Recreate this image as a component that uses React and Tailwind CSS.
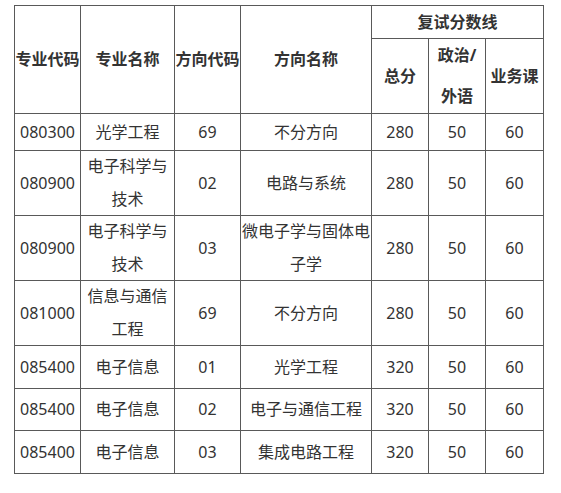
// 复试分数线 table
const rows = [
  ["080300", "光学工程", "69", "不分方向", "280", "50", "60"],
  ["080900", "电子科学与技术", "02", "电路与系统", "280", "50", "60"],
  ["080900", "电子科学与技术", "03", "微电子学与固体电子学", "280", "50", "60"],
  ["081000", "信息与通信工程", "69", "不分方向", "280", "50", "60"],
  ["085400", "电子信息", "01", "光学工程", "320", "50", "60"],
  ["085400", "电子信息", "02", "电子与通信工程", "320", "50", "60"],
  ["085400", "电子信息", "03", "集成电路工程", "320", "50", "60"],
];

function Cell({ children, className = "" }) {
  return (
    <div className={"bg-white flex items-center justify-center text-center leading-[33px] " + className}>
      <div>{children}</div>
    </div>
  );
}

export default function App() {
  return (
    <div
      className="w-[561px] h-[493px] bg-white pl-[14px] pt-[5px] text-[16px] text-[#333]"
      style={{ fontFamily: '"Noto Sans", "Noto Sans CJK SC", sans-serif' }}
    >
      <div className="grid w-[530px] grid-cols-[65px_93px_65px_130px_56px_56px_57px] grid-rows-[32px_74px_36px_64px_64px_64px_42px_41px_42px] gap-px bg-[#595959] p-px">
        <Cell className="row-span-2 font-bold">专业代码</Cell>
        <Cell className="row-span-2 font-bold">专业名称</Cell>
        <Cell className="row-span-2 font-bold">方向代码</Cell>
        <Cell className="row-span-2 font-bold">方向名称</Cell>
        <Cell className="col-span-3 font-bold">复试分数线</Cell>
        <Cell className="font-bold">总分</Cell>
        <Cell className="font-bold leading-[41px]">政治/<br />外语</Cell>
        <Cell className="font-bold">业务课</Cell>

        {rows.map((r, i) =>
          r.map((v, j) => <Cell key={i + "-" + j}>{v}</Cell>)
        )}
      </div>
    </div>
  );
}
